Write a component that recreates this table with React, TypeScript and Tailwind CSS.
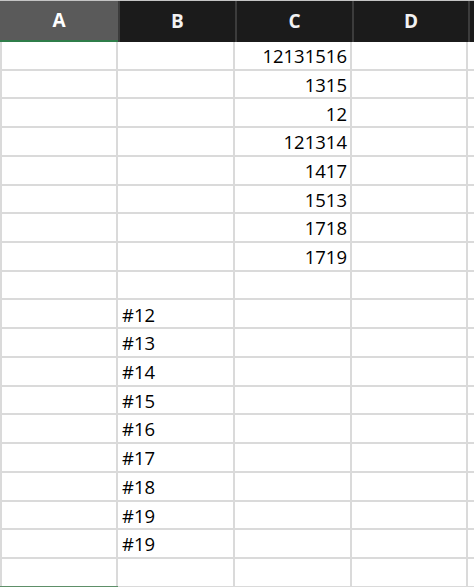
import React from 'react';

const columns = ['A', 'B', 'C', 'D', ''];

const numbers = ['12131516', '1315', '12', '121314', '1417', '1513', '1718', '1719'];
const tags = ['#12', '#13', '#14', '#15', '#16', '#17', '#18', '#19', '#19'];

type Row = { b?: string; c?: string };

const rows: Row[] = [
  ...numbers.map((c) => ({ c })),
  {},
  ...tags.map((b) => ({ b })),
  {},
];

export default function App() {
  return (
    <div
      className="w-[474px] h-[587px] overflow-hidden bg-white text-black"
      style={{ fontFamily: '"Open Sans", "Liberation Sans", sans-serif' }}
    >
      {/* Column headers */}
      <div className="grid grid-cols-[118px_117px_117px_116px_1fr] h-[42px] border-t border-[#c4c4c4] bg-[#1b1b1b]">
        {columns.map((col, i) => (
          <div
            key={i}
            className={
              i === 0
                ? 'flex items-center justify-center bg-[#5a5a5a] border-b-2 border-[#2f7d4a] text-[19px] font-bold text-white'
                : 'flex items-center justify-center border-l-2 border-[#3c3c3c] text-[19px] font-bold text-[#f2f2f2]'
            }
          >
            {col}
          </div>
        ))}
      </div>

      {/* Cells */}
      {rows.map((row, r) => (
        <div key={r} className="grid grid-cols-[118px_117px_117px_116px_1fr] h-[28.72px]">
          <div
            className={
              r === rows.length - 1
                ? 'border-l-2 border-r-2 border-[#dadada] relative'
                : 'border-l-2 border-r-2 border-b-2 border-[#dadada]'
            }
          >
            {r === rows.length - 1 && (
              <div className="absolute left-[-2px] right-[-2px] bottom-0 h-[2px] bg-[#5e8f69]" />
            )}
          </div>
          <div className="border-r-2 border-b-2 border-[#dadada] flex items-center pl-[4px] pt-[2px] text-[18.5px] leading-none">
            {row.b}
          </div>
          <div className="border-r-2 border-b-2 border-[#dadada] flex items-center justify-end pr-[3px] pt-[2px] text-[18.5px] leading-none">
            {row.c}
          </div>
          <div className="border-r-2 border-b-2 border-[#dadada]" />
          <div className="border-b-2 border-[#dadada]" />
        </div>
      ))}
    </div>
  );
}
